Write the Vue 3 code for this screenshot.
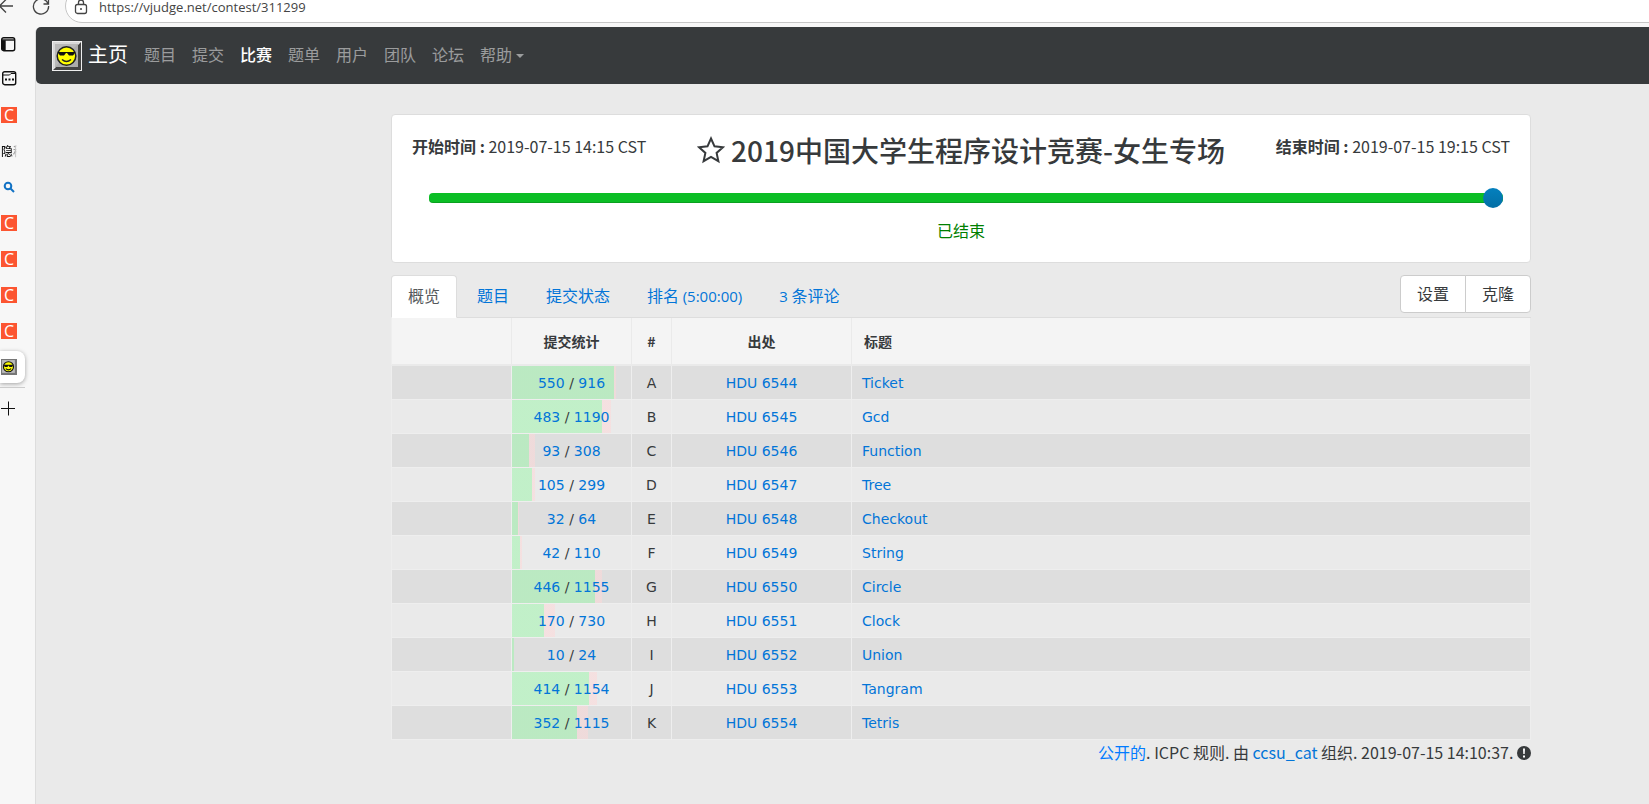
<template>
  <div class="browser">
    <header class="toolbar">
      <button class="tool back" aria-label="后退">
        <svg width="16" height="16" viewBox="0 0 16 16"><path d="M15 7H2M8 0.500L1.500 7L8 13.500" /></svg>
      </button>
      <button class="tool" aria-label="刷新">
        <svg width="18" height="18" viewBox="0 0 18 18"><path d="M16 5.500A7.600 7.600 0 1 0 16.600 8M16.500 1V6H11.500" /></svg>
      </button>
      <div class="address">
        <svg width="14" height="16" viewBox="0 0 14 16">
          <rect x="1.500" y="5.500" width="11" height="9" rx="2" />
          <path d="M4.500 5.500V3.500a2.500 2.500 0 0 1 5 0V5.500" />
          <circle class="dot" cx="7" cy="10" r="1" />
        </svg>
        <input v-model="url" type="text" aria-label="地址" />
      </div>
    </header>

    <div class="body">
      <aside class="tabs-pane">
        <button class="pane-btn short" aria-label="标签页">
          <svg class="line" width="16" height="16" viewBox="0 0 16 16">
            <rect x="0.700" y="1.700" width="13" height="13" rx="2" />
            <path class="solid" d="M1 5H4V14H2.500L1 12.500Z" />
            <path d="M1 4H14" />
          </svg>
        </button>
        <button class="pane-btn short" aria-label="工作区">
          <svg class="line" width="16" height="16" viewBox="0 0 16 16">
            <rect x="1.700" y="1.700" width="13" height="13" rx="2" />
            <path class="narrow" d="M2 5H8.500L10 3.500H15" />
            <path class="dots" d="M4 8.500H6V10.500H4ZM7.500 8.500H9.500V10.500H7.500ZM11 8.500H13V10.500H11Z" />
          </svg>
        </button>
        <button
          v-for="(tab, i) in paneTabs"
          :key="i"
          class="pane-btn"
          :class="{ active: tab === 'judge' }"
          :aria-label="'标签 ' + (i + 1)"
        >
          <span v-if="tab === 'csdn'" class="csdn">C</span>
          <span v-else-if="tab === 'text'" class="pane-text">隐秘</span>
          <svg v-else-if="tab === 'search'" class="search" width="16" height="16" viewBox="0 0 16 16">
            <circle cx="7" cy="7" r="3.300" />
            <path d="M9.500 9.500L13 13" />
          </svg>
          <svg v-else width="16" height="16" viewBox="0 0 30 30">
            <rect width="30" height="30" fill="#777" />
            <path d="M2 2H26V26H2Z" fill="#bbb" />
            <circle cx="14" cy="14.500" r="9.500" fill="#ff0" stroke="#111" stroke-width="2" />
            <path d="M5 11H23L21 15H16L14 12L12 15H7Z" fill="#111" />
            <path d="M9 18Q14 23 19 18" fill="none" stroke="#111" stroke-width="2" />
          </svg>
        </button>
        <hr />
        <button class="pane-btn new-tab" aria-label="新建标签页">
          <svg class="line" width="16" height="16" viewBox="0 0 16 16"><path d="M1 8.500H15M8.500 1.500V15.500" /></svg>
        </button>
      </aside>

      <div class="page">
        <nav class="navbar">
          <a href="#" class="brand">
            <svg width="30" height="30" viewBox="0 0 30 30">
              <rect width="30" height="30" fill="#eee" />
              <path d="M29 1V29H1L4 26H26V4Z" fill="#444" />
              <path d="M1 1H28L26 3H3V26L1 28Z" fill="#d8d8d8" />
              <path d="M3 3H26V26H3Z" fill="#b9b9b9" />
              <path d="M3 26L26 3V26Z" fill="#acacac" />
              <circle cx="14.500" cy="15" r="9.300" fill="#ff0" stroke="#222" stroke-width="1.500" />
              <path d="M6 11H23V12L21 14.500H17L15 12H14L12 14.500H8L6 12Z" fill="#111" />
              <path d="M10 18.500Q14.500 22.500 19 18.500" fill="none" stroke="#222" stroke-width="1.500" />
            </svg>
            <span>主页</span>
          </a>
          <a
            v-for="item in navItems"
            :key="item"
            href="#"
            class="nav-link"
            :class="{ active: item === '比赛', dropdown: item === '帮助' }"
          >{{ item }}</a>
        </nav>

        <main class="container">
          <section class="card">
            <div class="card-head">
              <div><b>开始时间 :</b> 2019-07-15 14:15 CST</div>
              <h3>
                <svg width="28" height="28" viewBox="0 0 28 28">
                  <path d="M14 2.500L17.500 10.300L26 11.200L19.600 16.900L21.400 25.200L14 21L6.600 25.200L8.400 16.900L2 11.200L10.500 10.300Z" />
                </svg>
                <span>2019中国大学生程序设计竞赛-女生专场</span>
              </h3>
              <div><b>结束时间 :</b> 2019-07-15 19:15 CST</div>
            </div>
            <input v-model="progress" class="timeline" type="range" min="0" max="100" aria-label="比赛进度" />
            <div class="status">已结束</div>
          </section>

          <div class="tab-row">
            <a href="#" class="tab active">概览</a>
            <a href="#" class="tab">题目</a>
            <a href="#" class="tab">提交状态</a>
            <a href="#" class="tab">排名 <span class="en">(5:00:00)</span></a>
            <a href="#" class="tab"><span class="en">3</span> 条评论</a>
            <div class="btn-group">
              <button>设置</button>
              <button>克隆</button>
            </div>
          </div>

          <table>
            <colgroup>
              <col class="col-mark" />
              <col class="col-stat" />
              <col class="col-num" />
              <col class="col-origin" />
              <col />
            </colgroup>
            <thead>
              <tr>
                <th></th>
                <th>提交统计</th>
                <th>#</th>
                <th>出处</th>
                <th class="title">标题</th>
              </tr>
            </thead>
            <tbody>
              <tr v-for="(p, i) in problems" :key="p.title">
                <td></td>
                <td class="stat" :style="barStyle(p)">
                  <a href="#">{{ p.ac }}</a> / <a href="#">{{ p.total }}</a>
                </td>
                <td>{{ letter(i) }}</td>
                <td><a href="#">HDU {{ 6544 + i }}</a></td>
                <td class="title"><a href="#">{{ p.title }}</a></td>
              </tr>
            </tbody>
          </table>

          <footer>
            <a href="#" class="public">公开的</a>. ICPC 规则. 由
            <a href="#">ccsu_cat</a>
            组织. 2019-07-15 14:10:37.
            <svg width="14" height="14" viewBox="0 0 14 14">
              <circle cx="7" cy="7" r="7" fill="#373a3c" />
              <path d="M6 2.500H8L7.700 8H6.300ZM6 9.500H8V11.500H6Z" fill="#fff" />
            </svg>
          </footer>
        </main>
      </div>
    </div>
  </div>
</template>

<script setup>
import { ref } from 'vue'

const url = ref('https://vjudge.net/contest/311299')
const progress = ref(100)

const navItems = ['题目', '提交', '比赛', '题单', '用户', '团队', '论坛', '帮助']
const paneTabs = ['csdn', 'text', 'search', 'csdn', 'csdn', 'csdn', 'csdn', 'judge']

const problems = [
  { title: 'Ticket', ac: 550, tried: 562, total: 916 },
  { title: 'Gcd', ac: 483, tried: 530, total: 1190 },
  { title: 'Function', ac: 93, tried: 126, total: 308 },
  { title: 'Tree', ac: 105, tried: 124, total: 299 },
  { title: 'Checkout', ac: 32, tried: 37, total: 64 },
  { title: 'String', ac: 42, tried: 52, total: 110 },
  { title: 'Circle', ac: 446, tried: 482, total: 1155 },
  { title: 'Clock', ac: 170, tried: 229, total: 730 },
  { title: 'Union', ac: 10, tried: 13, total: 24 },
  { title: 'Tangram', ac: 414, tried: 459, total: 1154 },
  { title: 'Tetris', ac: 352, tried: 411, total: 1115 }
]

const participants = 640

function letter(i) {
  return String.fromCharCode(65 + i)
}

function barStyle(p) {
  return {
    '--ac': `${(p.ac / participants) * 100}%`,
    '--tried': `${(p.tried / participants) * 100}%`
  }
}
</script>

<style>
body {
  margin: 0;
  background: #eaeaea;
}
</style>

<style scoped>
* {
  box-sizing: border-box;
}

.browser {
  min-height: 100vh;
  display: flex;
  flex-direction: column;
  overflow: hidden;
  background: #f7f7f7;
  color: #373a3c;
  font: 16px/24px "Noto Sans CJK SC", sans-serif;
}

a {
  color: #0275d8;
  text-decoration: none;
}

button {
  font: inherit;
  color: inherit;
  cursor: pointer;
}

.en {
  font-family: "Open Sans", sans-serif;
  font-size: 15px;
}

.toolbar {
  height: 27px;
  display: flex;
  align-items: flex-start;
}

.tool {
  width: 32px;
  height: 14px;
  padding: 0;
  border: 0;
  background: none;
  display: flex;
  align-items: center;
  justify-content: center;
}

.tool.back {
  width: 27px;
  justify-content: flex-start;
  margin-left: -2px;
}

.tool svg,
.address svg {
  fill: none;
  stroke: #444;
  stroke-width: 1.3;
  flex: none;
}

.address .dot {
  fill: #444;
  stroke: none;
}

.address {
  flex: 1;
  height: 34px;
  margin: -11px -20px 0 8px;
  padding: 2px 8px 0;
  display: flex;
  align-items: center;
  gap: 11px;
  border: 1px solid #c6c6c6;
  border-radius: 17px;
  background: #fff;
}

.address input {
  flex: 1;
  padding: 0;
  border: 0;
  outline: 0;
  background: none;
  color: #444;
  font: 13px/20px "Open Sans", sans-serif;
}

.body {
  flex: 1;
  display: flex;
}

.tabs-pane {
  width: 35px;
  flex: none;
  display: flex;
  flex-direction: column;
  align-items: flex-start;
}

.pane-btn {
  width: 25px;
  height: 32px;
  margin: 2px 0;
  padding: 0 0 0 1px;
  border: 0;
  border-radius: 0 8px 8px 0;
  background: none;
  display: flex;
  align-items: center;
}

.pane-btn.short {
  height: 30px;
}

.pane-btn.active {
  background: #fff;
  box-shadow: 0 1px 4px rgba(0, 0, 0, 0.35);
}

.pane-btn.short + .pane-btn:not(.short) {
  margin-top: 4px;
}

.line {
  fill: none;
  stroke: #111;
  stroke-width: 1.4;
}

.new-tab .line,
.line .narrow {
  stroke-width: 1;
}

.new-tab {
  padding: 0;
}

.line .solid,
.line .dots {
  fill: #111;
}

.line .dots {
  stroke: none;
}

.csdn {
  width: 16px;
  height: 16px;
  background: #fc5531;
  color: #fff;
  font: 16px/16px "Open Sans", sans-serif;
  text-align: center;
}

.pane-text {
  width: 16px;
  overflow: hidden;
  white-space: nowrap;
  font-size: 12px;
  font-weight: 500;
  color: #111;
  mask-image: linear-gradient(90deg, #000 60%, transparent);
}

.search {
  fill: none;
  stroke: #1272c4;
  stroke-width: 2;
}

.tabs-pane hr {
  width: 25px;
  height: 1px;
  margin: 2px 0;
  border: 0;
  background: #ccc;
}

.page {
  flex: 1;
  min-width: 0;
  background: #eaeaea;
  border-left: 1px solid #ddd;
  border-top-left-radius: 6px;
}

.navbar {
  height: 57px;
  padding: 0 16px;
  display: flex;
  align-items: center;
  gap: 16px;
  background: #373a3c;
  border-radius: 5px 0 0 5px;
}

.brand {
  display: flex;
  align-items: center;
  gap: 6px;
  color: #fff;
  font-size: 20px;
}

.brand span,
.nav-link {
  padding-bottom: 4px;
}

.nav-link {
  color: rgba(255, 255, 255, 0.5);
}

.nav-link.active {
  color: #fff;
  font-weight: 500;
}

.nav-link.dropdown::after {
  content: "";
  display: inline-block;
  margin-left: 4px;
  vertical-align: 3px;
  border: 4px solid transparent;
  border-top-color: currentColor;
  border-bottom: 0;
}

.container {
  padding: 30px 118px 0 355px;
}

.card {
  padding: 19px 20px 20px;
  background: #fff;
  border: 1px solid #ddd;
  border-radius: 4px;
  display: flex;
  flex-direction: column;
}

.card-head {
  display: flex;
  justify-content: space-between;
  align-items: flex-start;
}

h3 {
  margin: 0;
  display: flex;
  align-items: center;
  gap: 6px;
  font-size: 28px;
  line-height: 32px;
  font-weight: 500;
}

h3 svg {
  fill: none;
  stroke: #373a3c;
  stroke-width: 2;
}

.timeline {
  appearance: none;
  height: 20px;
  margin: 22px 7px 10px 17px;
  background: none;
}

.timeline::-webkit-slider-runnable-track {
  height: 10px;
  border-radius: 4px;
  background: #0bbe25;
  box-shadow: inset 0 -1px 0 rgba(0, 0, 0, 0.15);
}

.timeline::-webkit-slider-thumb {
  appearance: none;
  width: 20px;
  height: 20px;
  margin-top: -5px;
  border-radius: 50%;
  background: linear-gradient(#0480be, #036fa5);
}

.status {
  color: #008000;
  text-align: center;
}

.tab-row {
  margin-top: 12px;
  display: flex;
  gap: 3px;
  align-items: flex-start;
  border-bottom: 1px solid #ddd;
}

.tab {
  height: 43px;
  margin-bottom: -1px;
  padding: 7px 16px;
  border: 1px solid transparent;
  border-radius: 4px 4px 0 0;
}

.tab.active {
  color: #55595c;
  background: #fff;
  border-color: #ddd #ddd transparent;
}

.btn-group {
  margin-left: auto;
  display: flex;
}

.btn-group button {
  height: 38px;
  padding: 0 16px 2px;
  background: #fff;
  border: 1px solid #ccc;
  border-radius: 4px 0 0 4px;
}

.btn-group button + button {
  margin-left: -1px;
  border-radius: 0 4px 4px 0;
}

table {
  width: 100%;
  table-layout: fixed;
  border-collapse: separate;
  border-spacing: 0;
  font-size: 14px;
}

.col-mark {
  width: 121px;
}

.col-stat {
  width: 120px;
}

.col-num {
  width: 40px;
}

.col-origin {
  width: 180px;
}

th,
td {
  padding: 0;
  text-align: center;
  border-right: 1px solid #eee;
  border-bottom: 1px solid #eee;
}

th:first-child,
td:first-child {
  border-left: 1px solid #eee;
}

th {
  height: 48px;
  background: #f4f4f4;
  border-color: #eaeaea;
  border-bottom-width: 2px;
  font-weight: 700;
}

td {
  height: 34px;
  font-family: "DejaVu Sans", Verdana, sans-serif;
}

tbody tr:nth-child(odd) {
  background: #dedede;
}

.title {
  padding-left: 10px;
  text-align: left;
}

th.title {
  padding-left: 12px;
}

.stat {
  background: linear-gradient(
    90deg,
    rgba(144, 247, 160, 0.45) var(--ac),
    rgba(255, 215, 215, 0.5) var(--ac) var(--tried),
    transparent var(--tried)
  );
}

footer {
  text-align: right;
}

footer .public {
  color: #007bff;
}

footer svg {
  vertical-align: -1px;
}
</style>
